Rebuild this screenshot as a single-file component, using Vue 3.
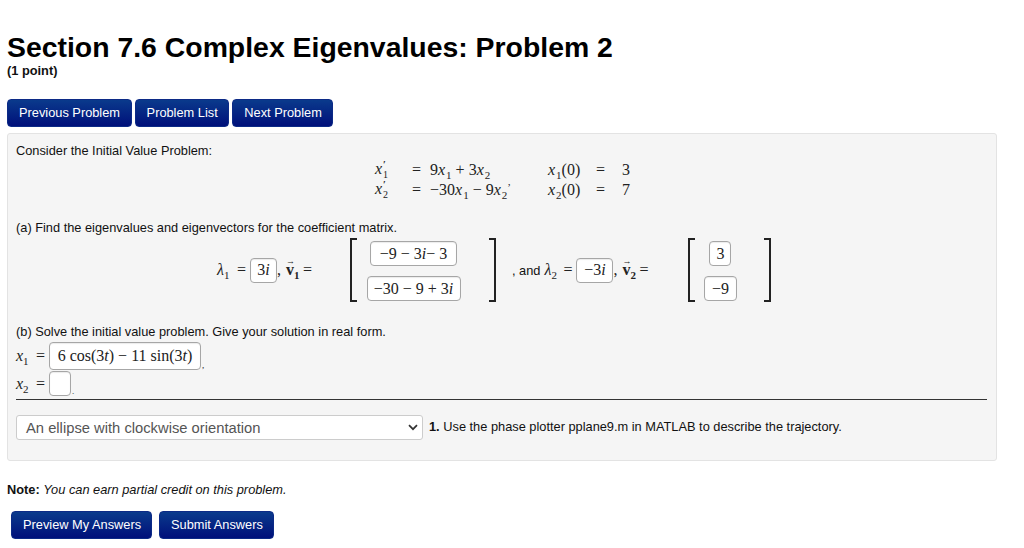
<script setup>
const navButtons = ['Previous Problem', 'Problem List', 'Next Problem']
const submitButtons = ['Preview My Answers', 'Submit Answers']
</script>

<template>
  <div class="page">
    <h1 class="title">Section 7.6 Complex Eigenvalues: Problem 2</h1>
    <div class="points">(1 point)</div>
    <nav class="nav">
      <button v-for="b in navButtons" :key="b" class="btn nav-btn">{{ b }}</button>
    </nav>
    <section class="panel">
      <p class="line">Consider the Initial Value Problem:</p>
      <div class="system">
        <span class="m"><i>x</i><span class="stack"><span class="prime">′</span><span>1</span></span></span>
        <span class="m">=</span>
        <span class="m">9<i>x</i><sub>1</sub> + 3<i>x</i><sub>2</sub></span>
        <span class="m"><i>x</i><sub>1</sub>(0)</span>
        <span class="m">=</span>
        <span class="m">3</span>
        <span class="m"><i>x</i><span class="stack"><span class="prime">′</span><span>2</span></span></span>
        <span class="m">=</span>
        <span class="m">−30<i>x</i><sub>1</sub> − 9<i>x</i><sub>2</sub><span class="tick">’</span></span>
        <span class="m"><i>x</i><sub>2</sub>(0)</span>
        <span class="m">=</span>
        <span class="m">7</span>
      </div>
      <p class="line part-a">(a) Find the eigenvalues and eigenvectors for the coefficient matrix.</p>
      <div class="eigen">
        <span class="m lhs"><i>λ</i><sub>1</sub></span>
        <span class="m eq-in">=</span>
        <span class="box m w-3i">3<i>i</i></span>
        <span class="m comma">,</span>
        <span class="m vec-name"><b class="vec">v</b><sub><b>1</b></sub></span>
        <span class="m eq-in">=</span>
        <div class="matrix m1">
          <span class="box m m1a">−9 − 3<i>i</i> − 3</span>
          <span class="box m m1b">−30 − 9 + 3<i>i</i></span>
        </div>
        <span class="and">, and</span>
        <span class="m lhs-2"><i>λ</i><sub>2</sub></span>
        <span class="m eq-in">=</span>
        <span class="box m w-m3i">−3<i>i</i></span>
        <span class="m comma">,</span>
        <span class="m vec-name"><b class="vec">v</b><sub><b>2</b></sub></span>
        <span class="m eq-in">=</span>
        <div class="matrix m2">
          <span class="box m m2a">3</span>
          <span class="box m m2b">−9</span>
        </div>
      </div>
      <p class="line part-b">(b) Solve the initial value problem. Give your solution in real form.</p>
      <div class="answer first">
        <span class="m lhs"><i>x</i><sub>1</sub></span>
        <span class="m eq-in">=</span>
        <span class="box m sol">6 cos(3<i>t</i>) − 11 sin(3<i>t</i>)</span>
        <span class="m tiny">,</span>
      </div>
      <div class="answer second">
        <span class="m lhs"><i>x</i><sub>2</sub></span>
        <span class="m eq-in">=</span>
        <span class="box m empty"></span>
        <span class="m tiny">.</span>
      </div>
      <hr class="rule" />
      <div class="select-row">
        <div class="select">
          <span>An ellipse with clockwise orientation</span>
          <svg width="10" height="7" viewBox="0 0 10 7"><path d="M1 1.2 5 5.2 9 1.2" fill="none" stroke="#333" stroke-width="1.7" /></svg>
        </div>
        <span class="line"><b>1.</b> Use the phase plotter pplane9.m in MATLAB to describe the trajectory.</span>
      </div>
    </section>
    <p class="note"><b>Note:</b> <i>You can earn partial credit on this problem.</i></p>
    <div class="submit">
      <button v-for="b in submitButtons" :key="b" class="btn">{{ b }}</button>
    </div>
  </div>
</template>

<style>
html, body { margin: 0; background: #fff; }
</style>

<style scoped>
.page {
  width: 1024px;
  height: 548px;
  overflow: hidden;
  box-sizing: border-box;
  padding: 30px 27px 0 7px;
  font-family: "Liberation Sans", Arial, sans-serif;
  color: #111;
  font-size: 12.8px;
}
.title {
  margin: 0;
  font-size: 28.4px;
  line-height: 34px;
  font-weight: 700;
  color: #000;
}
.points {
  font-size: 12.8px;
  font-weight: 700;
  line-height: 14px;
}
.nav {
  display: flex;
  gap: 3px;
  margin-top: 21px;
}
.btn {
  height: 28px;
  padding: 0 10px 2px 11px;
  border: 1px solid #0c2a86;
  border-radius: 4px;
  background: linear-gradient(#0a3a8c, #00107a);
  color: #fff;
  font: 12.8px "Liberation Sans", Arial, sans-serif;
}
.nav-btn { padding-right: 10.6px; }
.panel {
  margin-top: 6px;
  height: 328px;
  box-sizing: border-box;
  padding: 9px 9px 0 8px;
  background: #f5f5f5;
  border: 1px solid #e3e3e3;
  border-radius: 3px;
}
.line { margin: 0; line-height: 16px; }
.m {
  font-family: "Liberation Serif", "Times New Roman", serif;
  font-size: 16px;
  color: #222;
  white-space: nowrap;
}
.m sub { font-size: 11px; line-height: 0; }
.system {
  display: grid;
  grid-template-columns: 37px 18px 118px 48px 26px 20px;
  grid-auto-rows: 20px;
  align-items: center;
  margin: 1px 0 0 359px;
  width: 280px;
}
.system i { margin-right: 1px; }
.stack {
  display: inline-flex;
  flex-direction: column;
  vertical-align: middle;
  font-size: 10px;
  line-height: 10px;
}
.prime { font-weight: 700; }
.tick { vertical-align: 4px; font-size: 11px; }
.part-a { margin-top: 20px; }
.eigen {
  display: flex;
  align-items: center;
  height: 64px;
  margin: 2px 0 0 201px;
}
.vec {
  position: relative;
  display: inline-block;
}
.vec::before {
  content: "→";
  position: absolute;
  left: 0;
  top: -5px;
  font-size: 9px;
  font-weight: 700;
}
.lhs { width: 20px; }
.lhs-2 { width: 19px; }
.vec-name { width: 17px; }
.eq-in { width: 13px; flex: none; }
.comma { width: 9px; flex: none; }
.box {
  display: inline-flex;
  align-items: center;
  justify-content: center;
  box-sizing: border-box;
  height: 25px;
  background: #fff;
  border: 1px solid #a6a6a6;
  border-radius: 4px;
  box-shadow: inset 0 1px 1px rgba(0, 0, 0, 0.08);
}
.w-3i { width: 27px; }
.w-m3i { width: 37px; }
.matrix {
  position: relative;
  display: flex;
  flex-direction: column;
  align-items: center;
  justify-content: space-between;
  box-sizing: border-box;
  height: 64px;
  padding: 3px 19px 1px 0;
}
.matrix::before, .matrix::after {
  content: "";
  position: absolute;
  top: 0;
  bottom: 0;
  width: 5px;
  border: 2px solid #222;
}
.matrix::before { left: 0; border-right: 0; }
.matrix::after { right: 0; border-left: 0; }
.m1 { width: 146px; margin-left: 34px; }
.m2 { width: 83px; margin-left: 36px; }
.m1a { width: 87px; }
.m1b { width: 94px; }
.m2a { width: 22px; }
.m2b { width: 33px; }
.and { margin-left: 16px; margin-right: 4px; }
.part-b { margin-top: 22px; }
.answer { display: flex; align-items: center; }
.first { margin-top: 2px; height: 28px; }
.second { margin-top: 1px; height: 25px; }
.sol { width: 152px; height: 28px; }
.empty { width: 22px; }
.tiny { font-size: 9px; align-self: flex-end; margin-left: 1px; }
.rule {
  margin: 3px 0 0;
  border: 0;
  border-top: 1.5px solid #333;
}
.select-row {
  display: flex;
  align-items: center;
  gap: 6px;
  margin-top: 15px;
}
.select-row .line { position: relative; top: -1px; }
.select {
  display: flex;
  align-items: center;
  justify-content: space-between;
  box-sizing: border-box;
  width: 407px;
  height: 25px;
  padding: 0 4px 0 9px;
  background: #fff;
  border: 1px solid #ccc;
  border-radius: 3px;
  font-size: 14.75px;
  color: #555;
}
.note { margin: 21px 0 0; line-height: 16px; }
.submit {
  display: flex;
  gap: 7px;
  margin: 13px 0 0 4px;
}
</style>
